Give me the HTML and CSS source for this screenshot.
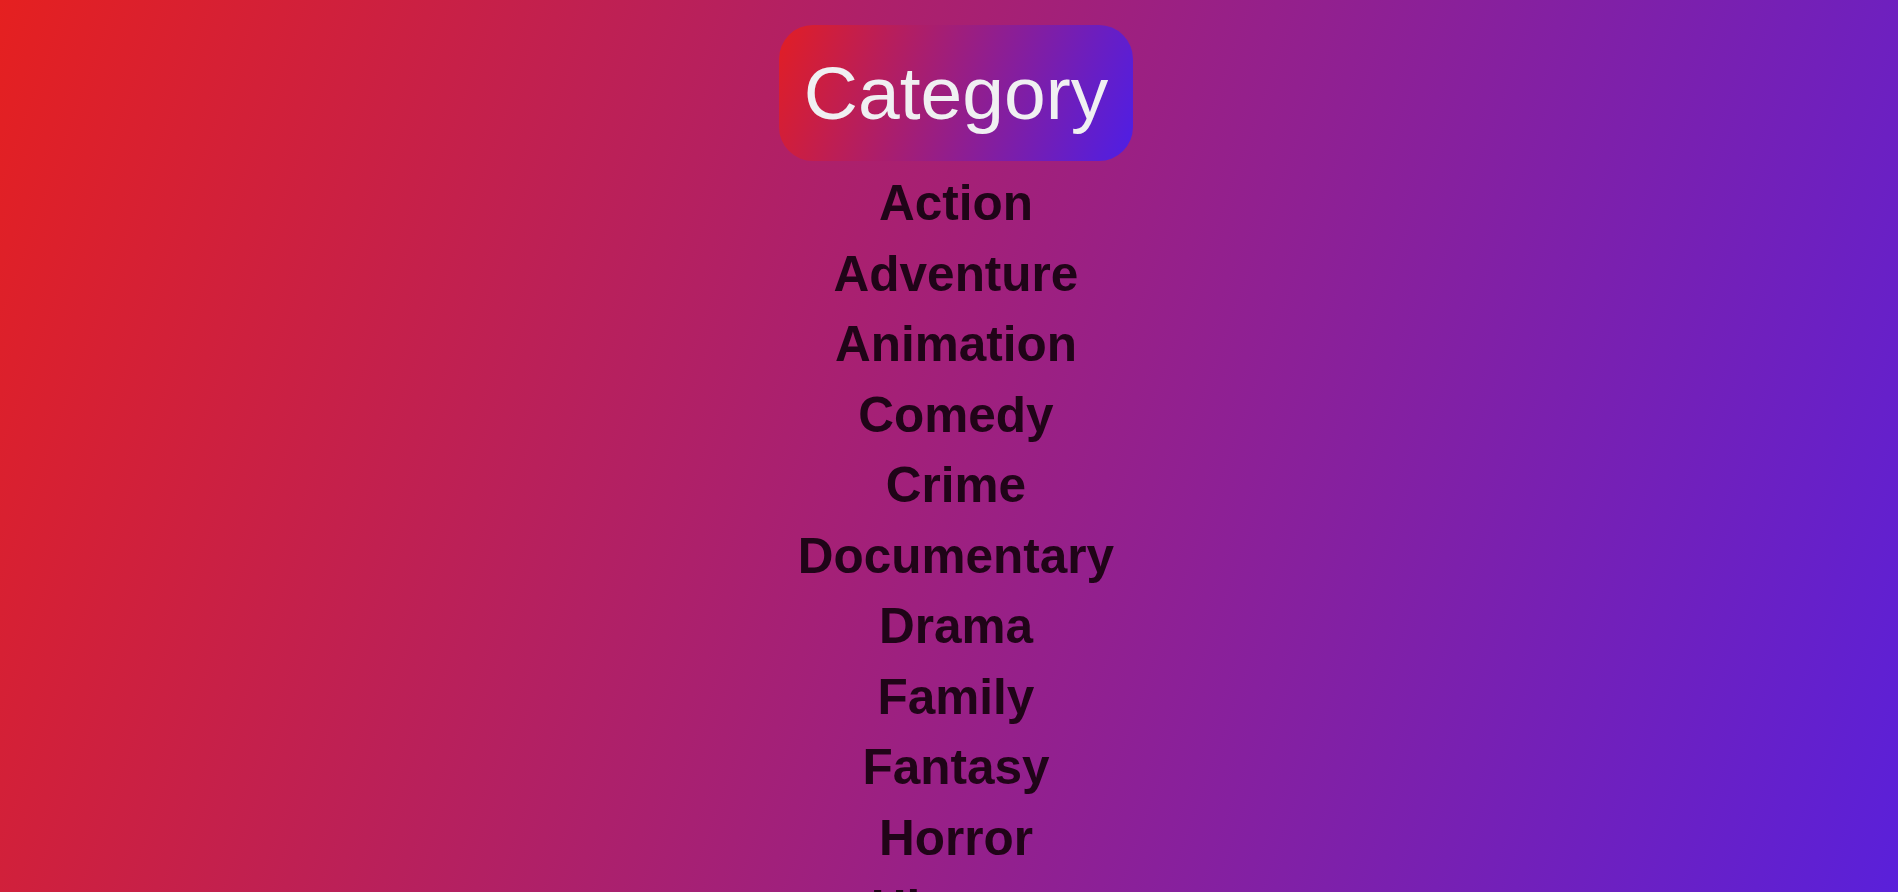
FILE: index.html
```html
<!DOCTYPE html>
<html lang="en">
<head>
    <meta charset="UTF-8">
    <meta name="viewport" content="width=device-width, initial-scale=1.0">
    <title>Category</title>
    <link rel="stylesheet" href="styles.css">
</head>
<body>
    <div class="category-page">
        <h1 class="category-title">Category</h1>

        <ul class="category-list">
            <li><a href="#">Action</a></li>
            <li><a href="#">Adventure</a></li>
            <li><a href="#">Animation</a></li>
            <li><a href="#">Comedy</a></li>
            <li><a href="#">Crime</a></li>
            <li><a href="#">Documentary</a></li>
            <li><a href="#">Drama</a></li>
            <li><a href="#">Family</a></li>
            <li><a href="#">Fantasy</a></li>
            <li><a href="#">Horror</a></li>
            <li><a href="#">History</a></li>
            <li><a href="#">Music</a></li>
            <li><a href="#">Mystery</a></li>
            <li><a href="#">Romance</a></li>
            <li><a href="#">Science Fiction</a></li>
            <li><a href="#">TV Movie</a></li>
            <li><a href="#">Thriller</a></li>
            <li><a href="#">War</a></li>
            <li><a href="#">Western</a></li>
        </ul>
    </div>
</body>
</html>
```

FILE: styles.css
```css
html {
    min-height: 100%;
    background: linear-gradient(110deg, #e52020, #5a20da); /* red to violet */
    background-attachment: fixed;
}

body {
    margin: 0;
    padding: 0 0 0 14px; /* content sits a bit right of center */
    font-family: "Liberation Sans", Arial, sans-serif;
}

.category-page {
    display: flex;
    flex-direction: column;
    align-items: center;
    padding-top: 25px;
}

/* header pill */
.category-title {
    margin: 0;
    padding: 25px;
    font-size: 75px;
    font-weight: normal;
    line-height: 86px;
    color: #f0f0f2;
    background: linear-gradient(110deg, #e21e24, #4e1ee6);
    border-radius: 34px;
}

.category-list {
    list-style: none;
    margin: 7px 0 0;
    padding: 0;
    text-align: center;
}

.category-list li {
    font-size: 49.5px;
    font-weight: bold;
    line-height: 70.5px;
}

.category-list a {
    color: #200418;
    text-decoration: none;
}

.category-list a:hover {
    color: #ffffff;
}
```
